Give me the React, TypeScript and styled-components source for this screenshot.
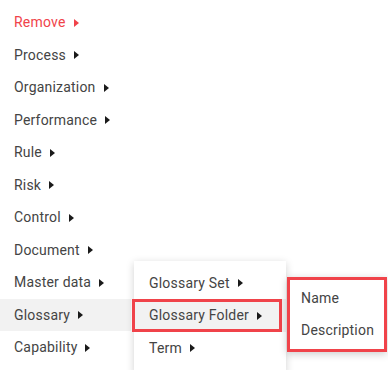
import React from "react";
import styled, { createGlobalStyle } from "styled-components";

const Global = createGlobalStyle`
  html, body { margin: 0; padding: 0; background: #fff; }
  body { font-family: Roboto, "Noto Sans", Arial, sans-serif; overflow: hidden; }
`;

const RED = "#f0434a";
const TEXT = "#444444";

const Page = styled.div`
  width: 388px;
  height: 370px;
  padding-top: 6px;
  box-sizing: border-box;
  position: relative;
`;

const Menu = styled.ul`
  list-style: none;
  margin: 0;
  padding: 0;
  width: 131px;
`;

const Item = styled.li<{ $danger?: boolean; $active?: boolean }>`
  position: relative;
  height: 32.5px;
  display: flex;
  align-items: center;
  gap: 8px;
  padding-left: 14px;
  font-size: 14px;
  letter-spacing: 0.2px;
  color: ${(p) => (p.$danger ? RED : TEXT)};
  background: ${(p) => (p.$active ? "#f2f2f2" : "transparent")};
  box-sizing: border-box;
  white-space: nowrap;
`;

const Outline = styled.div`
  position: absolute;
  left: -2px;
  right: 4px;
  top: 0;
  bottom: 0;
  border: 3px solid ${RED};
  pointer-events: none;
`;

const Caret = styled.span<{ $color?: string }>`
  display: inline-block;
  width: 0;
  height: 0;
  border-top: 4px solid transparent;
  border-bottom: 4px solid transparent;
  border-left: 5px solid ${(p) => p.$color || "#1a1a1a"};
  margin-top: 1px;
`;

const SubMenu = styled.ul`
  position: absolute;
  left: 134px;
  top: -38px;
  width: 152px;
  margin: 0;
  padding: 6px 0 10px;
  list-style: none;
  background: #fff;
  box-shadow: 0 2px 8px rgba(0, 0, 0, 0.18);
  z-index: 2;
`;

const SubItem = styled(Item)`
  padding-left: 15px;
`;

const ThirdMenu = styled.ul`
  position: absolute;
  left: 153px;
  top: -22px;
  width: 100px;
  margin: 0;
  padding: 2px 0 3px;
  list-style: none;
  background: #fff;
  border: 3px solid ${RED};
  box-sizing: border-box;
  box-shadow: 0 2px 8px rgba(0, 0, 0, 0.2);
  z-index: 3;
`;

const ThirdItem = styled.li`
  height: 32px;
  display: flex;
  align-items: center;
  padding-left: 11px;
  font-size: 14px;
  letter-spacing: 0.2px;
  color: ${TEXT};
  white-space: nowrap;
`;

const mainItems = [
  "Remove",
  "Process",
  "Organization",
  "Performance",
  "Rule",
  "Risk",
  "Control",
  "Document",
  "Master data",
  "Glossary",
  "Capability",
];

export default function App() {
  return (
    <Page>
      <Global />
      <Menu>
        {mainItems.map((label) => {
          const danger = label === "Remove";
          const glossary = label === "Glossary";
          return (
            <Item key={label} $danger={danger} $active={glossary}>
              {label}
              <Caret $color={danger ? RED : undefined} />
              {glossary && (
                <SubMenu>
                  <SubItem>
                    Glossary Set
                    <Caret />
                  </SubItem>
                  <SubItem $active>
                    Glossary Folder
                    <Caret />
                    <Outline />
                    <ThirdMenu>
                      <ThirdItem>Name</ThirdItem>
                      <ThirdItem>Description</ThirdItem>
                    </ThirdMenu>
                  </SubItem>
                  <SubItem>
                    Term
                    <Caret />
                  </SubItem>
                </SubMenu>
              )}
            </Item>
          );
        })}
      </Menu>
    </Page>
  );
}
